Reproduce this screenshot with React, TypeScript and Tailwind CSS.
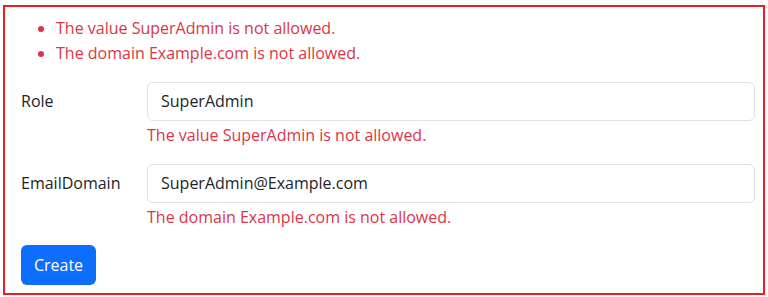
import React from "react";

export default function App() {
  const font = { fontFamily: '"Open Sans", "Noto Sans", sans-serif' };
  return (
    <div className="bg-white w-[768px] h-[297px] pt-[5px] pl-[3px]" style={font}>
      <div className="w-[762px] h-[290px] border-2 border-[#ec1c24] pl-4 pr-2 pt-[9px] text-[16px] leading-[25px]">
        <ul className="list-disc pl-[35px] text-[#dc3545]">
          <li>The value SuperAdmin is not allowed.</li>
          <li>The domain Example.com is not allowed.</li>
        </ul>
        <div className="mt-[16px] flex">
          <label className="w-[126px] h-[39px] flex items-center text-[#212529]">Role</label>
          <div className="flex-1">
            <div className="h-[39px] border border-[#dee2e6] rounded-[6px] flex items-center px-[13px] text-[#212529]">SuperAdmin</div>
            <div className="mt-[2px] text-[#dc3545]">The value SuperAdmin is not allowed.</div>
          </div>
        </div>
        <div className="mt-[16px] flex">
          <label className="w-[126px] h-[39px] flex items-center text-[#212529]">EmailDomain</label>
          <div className="flex-1">
            <div className="h-[39px] border border-[#dee2e6] rounded-[6px] flex items-center px-[13px] text-[#212529]">SuperAdmin@Example.com</div>
            <div className="mt-[2px] text-[#dc3545]">The domain Example.com is not allowed.</div>
          </div>
        </div>
        <button className="mt-[15px] w-[75px] h-[40px] rounded-[6px] bg-[#0d6efd] text-white flex items-center justify-center">Create</button>
      </div>
    </div>
  );
}
